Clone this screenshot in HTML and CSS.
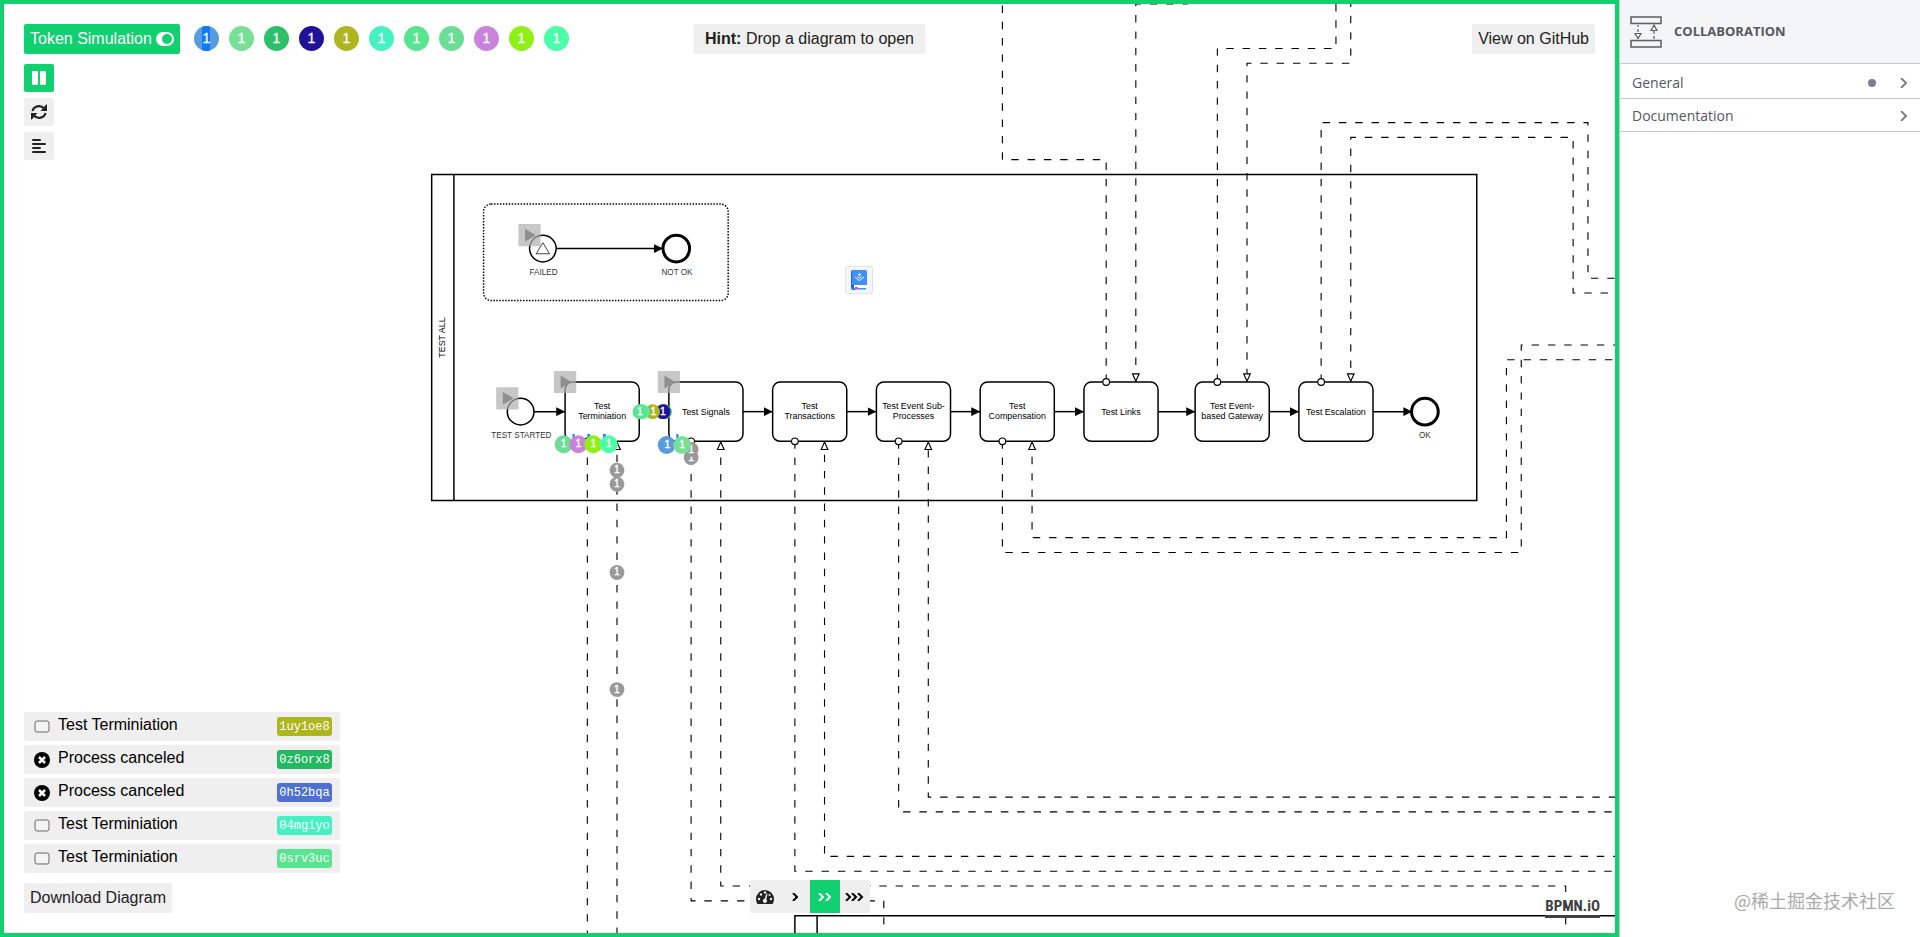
FILE: index.html
```html
<!DOCTYPE html>
<html lang="en">
<head>
<meta charset="utf-8">
<title>Token Simulation</title>
<link rel="stylesheet" href="styles.css">
</head>
<body>
<div class="app">
  <main class="canvas">
    <svg class="diagram" role="img" aria-label="Test all collaboration diagram">
      <defs>
        <marker id="seq" viewBox="0 0 10 10" refX="10" refY="5" markerWidth="12" markerHeight="12" markerUnits="userSpaceOnUse" orient="auto"><path d="M0 0L10 5L0 10Z"/></marker>
        <marker id="msg-out" viewBox="-6 -6 12 12" markerWidth="12" markerHeight="12" markerUnits="userSpaceOnUse"><circle class="marker" r="4.5"/></marker>
        <marker id="msg-in" viewBox="-2 -8 16 16" refX="0" refY="0" markerWidth="16" markerHeight="16" markerUnits="userSpaceOnUse" orient="auto"><path class="marker" d="M1 0L11 -4.5V4.5Z"/></marker>
        <g id="play"><rect class="play-box" width="30" height="30" rx="1"/><path class="play-arrow" d="M9 7Q9 6 10 7L22 14Q23 15 22 16L10 23Q9 24 9 23Z"/></g>
      </defs>
      <g transform="translate(561.1 378) scale(.7412)">
        <path class="frame" d="M-180 -280H1230V160H-180ZM-150 -280V160"/>
        <path class="frame" d="M310 800V720H1500M340 720V800"/>
        <text class="name" transform="translate(-162 -60) rotate(-90)">TEST ALL</text>
        <rect class="group" x="-110" y="-240" width="330" height="130" rx="10"/>

        <g class="sequence">
          <path d="M-12 -180H132"/><path d="M-42 40H0"/><path d="M100 40H140"/><path d="M240 40H280"/><path d="M380 40H420"/>
          <path d="M520 40H560"/><path d="M660 40H700"/><path d="M800 40H850"/><path d="M950 40H990"/><path d="M1090 40H1143"/>
        </g>
        <g class="shape">
          <circle cx="-30" cy="-180" r="18"/><circle cx="-60" cy="40" r="18"/>
          <circle class="end" cx="150" cy="-180" r="18"/><circle class="end" cx="1160" cy="40" r="18"/>
          <path class="signal" d="M-39 -173H-21L-30 -188Z"/>
          <rect x="0" width="100" height="80" rx="10"/><rect x="140" width="100" height="80" rx="10"/>
          <rect x="280" width="100" height="80" rx="10"/><rect x="420" width="100" height="80" rx="10"/>
          <rect x="560" width="100" height="80" rx="10"/><rect x="700" width="100" height="80" rx="10"/>
          <rect x="850" width="100" height="80" rx="10"/><rect x="990" width="100" height="80" rx="10"/>
        </g>
        <g class="name">
          <text x="50" y="36">Test</text><text x="50" y="50">Terminiation</text>
          <text x="190" y="44">Test Signals</text>
          <text x="330" y="36">Test</text><text x="330" y="50">Transactions</text>
          <text x="470" y="36">Test Event Sub-</text><text x="470" y="50">Processes</text>
          <text x="610" y="36">Test</text><text x="610" y="50">Compensation</text>
          <text x="750" y="44">Test Links</text>
          <text x="900" y="36">Test Event-</text><text x="900" y="50">based Gateway</text>
          <text x="1040" y="44">Test Escalation</text>
        </g>
        <g class="label">
          <text x="-29" y="-145">FAILED</text><text x="151" y="-145">NOT OK</text>
          <text x="-59" y="75">TEST STARTED</text><text x="1160" y="75">OK</text>
        </g>
        <g class="message out">
          <path d="M30 80V800"/>
          <path d="M170 80V700H430V800"/>
          <path d="M310 80V660H1500"/>
          <path d="M450 80V580H1500"/>
          <path d="M590 80V230H1290V-50H1500"/>
          <path d="M730 0V-300H590V-600"/>
          <path d="M880 0V-450H1040V-600"/>
          <path d="M1020 0V-350H1380V-140H1500"/>
        </g>
        <g class="message in">
          <path stroke-dashoffset="4" d="M70 80V800"/>
          <path stroke-dashoffset="0" d="M210 80V680H1350V800"/>
          <path stroke-dashoffset="4" d="M350 80V640H1500"/>
          <path stroke-dashoffset="10" d="M490 80V560H1500"/>
          <path stroke-dashoffset="1" d="M630 80V210H1270V-30H1500"/>
          <path stroke-dashoffset="21" d="M770 0V-510H840"/>
          <path stroke-dashoffset="14" d="M920 0V-430H1060V-600"/>
          <path stroke-dashoffset="3" d="M1060 0V-330H1360V-120H1500"/>
        </g>

        <use href="#play" x="-63" y="-213"/><use href="#play" x="-93" y="7"/>
        <use href="#play" x="-15" y="-15"/><use href="#play" x="125" y="-15"/>

        <path class="selected" d="M10 70h3v6h-3zM30 70h4v6h-4zM51 70h4v6h-4zM150 70h3v6h-3z"/>
        <g class="count small">
          <circle class="grey" cx="170" cy="102" r="10"/><text x="170" y="107">1</text>
          <circle class="grey" cx="170" cy="91" r="10"/><text x="170" y="96">1</text>
          <circle class="grey" cx="70" cy="119" r="10"/><text x="70" y="123">1</text>
          <circle class="grey" cx="70" cy="138" r="10"/><text x="70" y="142">1</text>
          <circle class="grey" cx="70" cy="257" r="10"/><text x="70" y="261">1</text>
          <circle class="grey" cx="70" cy="415" r="10"/><text x="70" y="419">1</text>
          <circle class="c3" cx="134" cy="40" r="10"/>
          <circle class="c4" cx="132" cy="40" r="10"/><text x="132" y="44">1</text>
          <circle class="c5" cx="118" cy="40" r="10"/><text x="119" y="44">1</text>
          <circle class="c6" cx="104" cy="40" r="10"/>
          <circle class="c7" cx="101" cy="40" r="10"/><text x="101" y="44">1</text>
        </g>
        <g class="count">
          <circle class="c8" cx="-2" cy="84" r="12"/><text x="-2" y="88">1</text>
          <circle class="c9" cx="18" cy="84" r="12"/><text x="18" y="88">1</text>
          <circle class="c10" cx="38" cy="84" r="12"/><text x="38" y="88">1</text>
          <circle class="c11" cx="59" cy="84" r="12"/><text x="59" y="88">1</text>
          <circle class="c1" cx="137" cy="85" r="12"/><text x="138" y="89">1</text>
          <circle class="c2" cx="158" cy="85" r="12"/><text x="158" y="89">1</text>
        </g>
      </g>
    </svg>

    <div class="top-left">
      <button class="btn toggle active" type="button">Token Simulation
        <svg width="18" height="14" viewBox="0 0 18 14"><rect width="18" height="14" rx="7" fill="#fff"/><circle cx="11" cy="7" r="5" fill="#10d070"/></svg>
      </button>
      <div class="scopes">
        <button class="scope c1 picked" type="button"><span>1</span></button>
        <button class="scope c2" type="button">1</button>
        <button class="scope c3" type="button">1</button>
        <button class="scope c4" type="button">1</button>
        <button class="scope c5" type="button">1</button>
        <button class="scope c6" type="button">1</button>
        <button class="scope c7" type="button">1</button>
        <button class="scope c8" type="button">1</button>
        <button class="scope c9" type="button">1</button>
        <button class="scope c10" type="button">1</button>
        <button class="scope c11" type="button">1</button>
      </div>
    </div>

    <div class="palette">
      <button class="btn tool active" type="button" aria-label="Pause"><svg width="14" height="14" viewBox="0 0 14 14"><rect width="6" height="14" rx="1" fill="currentColor"/><rect x="8" width="6" height="14" rx="1" fill="currentColor"/></svg></button>
      <button class="btn tool" type="button" aria-label="Reset"><svg width="16" height="16" viewBox="0 0 16 16" fill="none" stroke="currentColor" stroke-width="2.200"><path d="M1.500 7A6.500 6 0 0 1 13 4.500M14.500 9A6.500 6 0 0 1 3 11.500"/><path fill="currentColor" stroke="none" d="M16 0V7H9.500L11.500 5L14 1.800ZM0 16V9H6.500L4.500 11L2 14.200Z"/></svg></button>
      <button class="btn tool" type="button" aria-label="Show log"><svg width="14" height="14" viewBox="0 0 14 14" stroke="currentColor" stroke-width="2" stroke-linecap="round"><path d="M1 1H8M1 5H13M1 9H8M1 13H13"/></svg></button>
    </div>

    <p class="btn hint"><strong>Hint:</strong> Drop a diagram to open</p>
    <a class="btn github" href="#">View on GitHub</a>

    <button class="book" type="button" aria-label="Open notes"><svg width="18" height="20" viewBox="0 0 18 20"><path fill="#1769d8" d="M3 0H5V20H3Q1 20 1 17V2Q1 0 3 0Z"/><path fill="#3f90ff" d="M3 0H15Q17 0 17 2V15H2V2Q2 0 3 0Z"/><path fill="#fff" d="M4 15H17V18H4Z"/><path fill="#3f90ff" d="M3 18H16V19.500H4Q2 19.500 3 18Z"/><path fill="#f15b6c" d="M5 17H8V20L6.500 19L5 20Z"/><path fill="none" stroke="#fff" d="M5 7L9.500 10.500L14 7M7.500 6.500L9.500 8L11.500 6.500"/><path fill="#fff" d="M8 4.500L9.500 3L11 4.500L9.500 6Z"/></svg></button>

    <div class="bottom-left">
      <ul class="log">
        <li class="entry"><svg class="kind" viewBox="0 0 16 16"><rect class="task" x="1" y="2" width="14" height="11" rx="2"/></svg><span>Test Terminiation</span><code class="id c5">1uy1oe8</code></li>
        <li class="entry"><svg class="kind" viewBox="0 0 16 16"><circle cx="8" cy="8" r="8"/><path class="cross" d="M5 5L11 11M11 5L5 11"/></svg><span>Process canceled</span><code class="id green">0z6orx8</code></li>
        <li class="entry"><svg class="kind" viewBox="0 0 16 16"><circle cx="8" cy="8" r="8"/><path class="cross" d="M5 5L11 11M11 5L5 11"/></svg><span>Process canceled</span><code class="id blue">0h52bqa</code></li>
        <li class="entry"><svg class="kind" viewBox="0 0 16 16"><rect class="task" x="1" y="2" width="14" height="11" rx="2"/></svg><span>Test Terminiation</span><code class="id c6">04mgiyo</code></li>
        <li class="entry"><svg class="kind" viewBox="0 0 16 16"><rect class="task" x="1" y="2" width="14" height="11" rx="2"/></svg><span>Test Terminiation</span><code class="id c7">0srv3uc</code></li>
      </ul>
      <a class="btn download" href="#">Download Diagram</a>
    </div>

    <div class="speed">
      <span class="step"><svg width="18" height="14" viewBox="0 0 18 14"><path fill="#222" d="M9 0A9 9 0 0 1 18 9Q18 12 16.500 14H1.500Q0 12 0 9A9 9 0 0 1 9 0Z"/><g fill="#efefef"><circle cx="3" cy="9" r="1.200"/><circle cx="5" cy="4.500" r="1.200"/><circle cx="9" cy="2.500" r="1.200"/><circle cx="15" cy="9" r="1.200"/><circle cx="13.500" cy="5" r="1"/><path d="M10.500 3.500L11.500 3.800L10.300 9.500A2 2 0 1 1 8.500 9Z"/></g></svg></span>
      <button class="step" type="button" aria-label="Slow"><svg width="6" height="8" viewBox="0 0 6 8"><path class="chev" d="M1 0L5 4L1 8"/></svg></button>
      <button class="step active" type="button" aria-label="Normal"><svg width="13" height="8" viewBox="0 0 13 8"><path class="chev" d="M1 0L5 4L1 8M8 0L12 4L8 8"/></svg></button>
      <button class="step" type="button" aria-label="Fast"><svg width="19" height="8" viewBox="0 0 19 8"><path class="chev" d="M1 0L5 4L1 8M7 0L11 4L7 8M13 0L17 4L13 8"/></svg></button>
    </div>

    <a class="logo" href="#">BPMN.iO</a>
  </main>

  <aside class="panel">
    <header class="panel-head">
      <svg width="32" height="32" viewBox="0 0 32 32" fill="none" stroke="#5a5d66"><path stroke-width="1.500" d="M1 1H31V7.500H1ZM1 24.500H31V31H1Z"/><path stroke-width="1.200" d="M8 9V11M8 13V16M24 15V18M24 20V23M5 17.500H11L8 22.500ZM21 14.500H27L24 9Z"/></svg>
      <h2>Collaboration</h2>
    </header>
    <button class="row" type="button">General<i class="dot"></i><svg width="7" height="10" viewBox="0 0 7 10"><path class="arrow" d="M1 0L6 5L1 10"/></svg></button>
    <button class="row" type="button">Documentation<svg width="7" height="10" viewBox="0 0 7 10"><path class="arrow" d="M1 0L6 5L1 10"/></svg></button>
    <p class="watermark">@稀土掘金技术社区</p>
  </aside>
</div>
</body>
</html>
```
FILE: styles.css
```css
* { box-sizing: border-box; }
body { margin: 0; font: 16px/20px "Liberation Sans", Arial, sans-serif; color: #222; background: #fff; }
button { border: 0; padding: 0; margin: 0; font: inherit; color: inherit; cursor: pointer; }
a { color: inherit; text-decoration: none; }
p, h2, ul { margin: 0; padding: 0; }

.app { display: flex; height: 100vh; overflow: hidden; }
.canvas { position: relative; flex: 1; min-width: 0; overflow: hidden; border: 4px solid #10d070; }
.diagram { position: absolute; inset: 0; width: 100%; height: 100%; }

/* diagram */
.frame { fill: none; stroke: #000; stroke-width: 2; }
.group { fill: none; stroke: #000; stroke-width: 2; stroke-dasharray: 2 2; }
.sequence path { fill: none; stroke: #000; stroke-width: 2; marker-end: url(#seq); }
.shape { fill: #fff; stroke: #000; stroke-width: 2; }
.shape .end { stroke-width: 4; }
.shape .signal { stroke-width: 1; }
.message path { fill: none; stroke: #000; stroke-width: 1.5; stroke-dasharray: 10 12; }
.out path { marker-start: url(#msg-out); }
.in path { marker-start: url(#msg-in); }
.message .marker, .marker { fill: #fff; stroke: #000; stroke-width: 1.5; stroke-dasharray: none; }
.name { font-size: 12px; fill: #000; text-anchor: middle; }
.label { font-size: 11px; fill: #333; text-anchor: middle; }
.play-box { fill: #afafaf; opacity: .7; }
.play-arrow { fill: #8f8f8f; }
.selected { fill: #2d84f5; }
.count { font-size: 14px; text-anchor: middle; }
.count text { fill: #fff; stroke: #fff; stroke-width: 0.5; }
.grey { fill: #999; }

/* token colours */
.c1 { fill: #5a9bdf; background: #5a9bdf; }
.c2 { fill: #78df96; background: #78df96; }
.c3 { fill: #2cc068; background: #2cc068; }
.c4 { fill: #1f1299; background: #1f1299; }
.c5 { fill: #aeb61e; background: #aeb61e; }
.c6 { fill: #45f1c3; background: #45f1c3; }
.c7 { fill: #57e68f; background: #57e68f; }
.c8 { fill: #6cdd94; background: #6cdd94; }
.c9 { fill: #c983dd; background: #c983dd; }
.c10 { fill: #8ef015; background: #8ef015; }
.c11 { fill: #4affa8; background: #4affa8; }
.green { background: #22b961; }
.blue { background: #4e70d2; }

/* overlays */
.btn { background: #efefef; border-radius: 2px; padding: 5px 6px; }
.btn svg, .step svg { display: block; }
.active { background: #10d070; color: #fff; }
.top-left { position: absolute; left: 20px; top: 20px; display: flex; align-items: flex-start; gap: 14px; }
.toggle { display: flex; align-items: center; gap: 4px; height: 30px; }
.scopes { display: flex; gap: 10px; padding-top: 2px; }
.scope { width: 25px; height: 25px; border-radius: 50%; overflow: hidden; color: #fff; font-size: 14px; line-height: 25px; text-align: center; -webkit-text-stroke: 0.3px #fff; }
.picked span { display: inline-block; background: #0f79f9; }
.palette { position: absolute; left: 20px; top: 60px; display: grid; gap: 6px; }
.tool { width: 30px; height: 28px; padding: 0; display: grid; place-items: center; }
.hint { position: absolute; top: 20px; left: 50%; transform: translateX(-50%); padding: 5px 12px; white-space: nowrap; }
.github { position: absolute; top: 20px; right: 20px; }
.book { position: absolute; left: 841px; top: 262px; width: 28px; height: 28px; display: grid; place-items: center; background: #f5f6fa; border: 1px solid #e0e3ec; border-radius: 2px; }
.bottom-left { position: absolute; left: 20px; bottom: 20px; display: flex; flex-direction: column; align-items: flex-start; gap: 10px; }
.log { display: grid; gap: 4px; width: 316px; list-style: none; color: #000; }
.entry { display: flex; align-items: center; height: 29px; padding: 0 8px 0 10px; background: #efefef; border-radius: 2px; }
.entry span { flex: 1; padding-bottom: 3px; }
.kind { width: 16px; height: 16px; margin-right: 8px; }
.task { fill: #f4f4f4; stroke: #666; }
.cross { stroke: #fff; stroke-width: 2.5; }
.id { width: 55px; height: 19px; border-radius: 3px; color: #fff; font: 12px/20px "Liberation Mono", monospace; text-align: center; }
.speed { position: absolute; left: 50%; bottom: 20px; transform: translateX(-50%); display: flex; overflow: hidden; border-radius: 2px; background: #efefef; }
.step { width: 30px; height: 33px; display: grid; place-items: center; background: #efefef; color: #000; }
.step.active { background: #10d070; color: #fff; }
.chev { fill: none; stroke: currentColor; stroke-width: 2; }
.logo { position: absolute; right: 15px; bottom: 15px; border-bottom: 3px solid #404040; color: #404040; font: bold 15px/18px "Liberation Sans Narrow", "Roboto Condensed", Roboto, sans-serif; }

/* properties panel */
.panel { width: 301px; flex: none; display: flex; flex-direction: column; border-left: 1px solid #ccc; font-family: "Open Sans", "Noto Sans", sans-serif; color: #55585f; }
.panel-head { display: flex; align-items: center; gap: 12px; height: 64px; padding: 0 10px; background: #f4f5f7; border-bottom: 1px solid #c8c8d0; }
.panel-head h2 { padding-bottom: 2px; font-size: 13px; line-height: 20px; text-transform: uppercase; }
.row { display: flex; align-items: center; height: 33px; padding: 1px 13px 0 12px; background: #fff; border-bottom: 1px solid #c8c8d0; font-size: 14px; }
.panel-head + .row { height: 35px; padding-top: 3px; }
.row svg { margin-left: auto; }
.dot { width: 8px; height: 8px; margin-left: auto; border-radius: 50%; background: #7b808b; }
.row .dot + svg { margin-left: 24px; }
.arrow { fill: none; stroke: #7b808b; stroke-width: 2; }
.watermark { margin: auto 25px 24px auto; color: #aaa; font: 18px/26px "Noto Sans CJK SC", sans-serif; }
```
